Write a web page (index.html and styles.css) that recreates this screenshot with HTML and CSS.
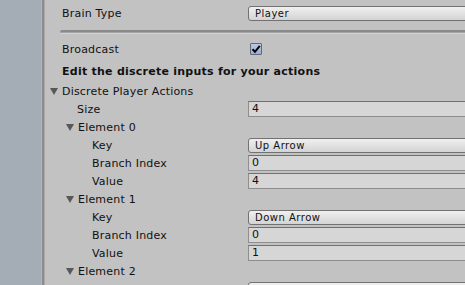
FILE: index.html
```html
<!DOCTYPE html>
<html lang="en">
<head>
  <meta charset="UTF-8" />
  <title>Brain Inspector</title>
  <link rel="stylesheet" href="styles.css">
</head>
<body>
  <div class="sidebar"></div>
  <div class="splitter"></div>

  <div class="inspector">
    <div class="row first">
      <div class="label">Brain Type</div>
      <div class="value"><div class="popup">Player</div></div>
    </div>

    <div class="divider"></div>

    <div class="row">
      <div class="label">Broadcast</div>
      <div class="value">
        <div class="checkbox">
          <svg viewBox="0 0 10 10" width="10" height="10">
            <path d="M1.5 5.2 L4 7.8 L8.8 1.8" fill="none" stroke="#000" stroke-width="2" />
          </svg>
        </div>
      </div>
    </div>

    <div class="row heading">
      <div class="label">Edit the discrete inputs for your actions</div>
    </div>

    <div class="row">
      <div class="label foldout"><span class="arrow"></span>Discrete Player Actions</div>
    </div>
    <div class="row">
      <div class="label lvl1">Size</div>
      <div class="value"><div class="field">4</div></div>
    </div>

    <!-- Element 0 -->
    <div class="row">
      <div class="label foldout lvl1"><span class="arrow"></span>Element 0</div>
    </div>
    <div class="row">
      <div class="label lvl2">Key</div>
      <div class="value"><div class="popup">Up Arrow</div></div>
    </div>
    <div class="row">
      <div class="label lvl2">Branch Index</div>
      <div class="value"><div class="field">0</div></div>
    </div>
    <div class="row">
      <div class="label lvl2">Value</div>
      <div class="value"><div class="field">4</div></div>
    </div>

    <!-- Element 1 -->
    <div class="row">
      <div class="label foldout lvl1"><span class="arrow"></span>Element 1</div>
    </div>
    <div class="row">
      <div class="label lvl2">Key</div>
      <div class="value"><div class="popup">Down Arrow</div></div>
    </div>
    <div class="row">
      <div class="label lvl2">Branch Index</div>
      <div class="value"><div class="field">0</div></div>
    </div>
    <div class="row">
      <div class="label lvl2">Value</div>
      <div class="value"><div class="field">1</div></div>
    </div>

    <!-- Element 2 -->
    <div class="row">
      <div class="label foldout lvl1"><span class="arrow"></span>Element 2</div>
    </div>
    <div class="row">
      <div class="label lvl2">Key</div>
      <div class="value"><div class="popup">Left Arrow</div></div>
    </div>
  </div>
</body>
</html>
```

FILE: styles.css
```css
/* Base */
* {
  margin: 0;
  padding: 0;
  box-sizing: border-box;
}

html, body {
  width: 465px;
  height: 285px;
  overflow: hidden;
}

body {
  display: flex;
  background: #c2c2c2;
  font-family: 'DejaVu Sans', sans-serif;
  font-size: 11px;
  letter-spacing: 0.2px;
  color: #111;
}

/* Left strip */
.sidebar {
  width: 41px;
  flex: none;
  background: #a4acb5;
}

.splitter {
  width: 4px;
  flex: none;
  background: #8c8c8c;
  border-left: 1px solid #b3b8bd;
  border-right: 1px solid #a9a9a9;
}

/* Inspector */
.inspector {
  flex: none;
  width: 460px;
}

.row {
  display: flex;
  align-items: center;
  height: 18px;
}

.row.first {
  margin-top: 4px;
}

.label {
  width: 203px;
  flex: none;
  padding-left: 17px;
  white-space: nowrap;
  display: flex;
  align-items: center;
}

.label.lvl1 { padding-left: 32px; }
.label.lvl2 { padding-left: 47px; }

.foldout { padding-left: 5px; }
.foldout.lvl1 { padding-left: 21px; }

.arrow {
  width: 0;
  height: 0;
  margin-right: 4px;
  border-left: 4px solid transparent;
  border-right: 4px solid transparent;
  border-top: 7px solid #585858;
}

.heading {
  height: 20px;
  margin-top: 3px;
  margin-bottom: 1px;
}

.heading .label {
  font-weight: bold;
  letter-spacing: 0.25px;
  width: auto;
}

.value {
  flex: 1;
  display: flex;
  align-items: center;
}

/* Divider */
.divider {
  height: 4px;
  margin: 8px 0 6px 15px;
  border-radius: 2px 0 0 2px;
  background: linear-gradient(#8a8a8a 0, #8a8a8a 2px, #a4a4a4 2px, #a4a4a4 3px, #d2d2d2 3px);
}

/* Controls */
.popup {
  width: 100%;
  height: 15px;
  padding: 0 6px;
  border: 1px solid #727272;
  border-radius: 3px;
  background: linear-gradient(#f0f0f0, #d3d3d3);
  font-size: 10px;
  line-height: 13px;
  letter-spacing: 0.5px;
}

.field {
  width: 100%;
  height: 16px;
  padding: 0 3px;
  border: 1px solid #8e8e8e;
  border-top-color: #707070;
  background: #d6d6d6;
  line-height: 14px;
}

.checkbox {
  width: 12px;
  height: 12px;
  margin-left: 2px;
  border: 1px solid #5f6a7a;
  border-radius: 1px;
  background: linear-gradient(#b9c9e4, #98aed4);
  display: flex;
  align-items: center;
  justify-content: center;
}
```
